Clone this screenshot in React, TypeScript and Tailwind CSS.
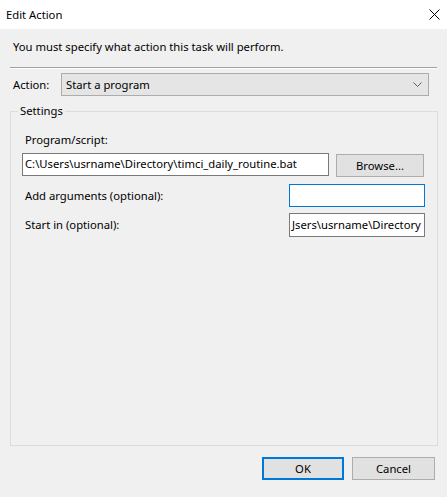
import React from 'react'

const font = { fontFamily: '"Noto Sans", "Open Sans", sans-serif' }

function CloseIcon() {
  return (
    <svg width="11" height="11" viewBox="0 0 11 11" className="block">
      <path d="M0.5 0.5 L10.5 10.5 M10.5 0.5 L0.5 10.5" stroke="#000" strokeWidth="1" fill="none" />
    </svg>
  )
}

function Chevron() {
  return (
    <svg width="9" height="5" viewBox="0 0 9 5" className="block">
      <path d="M0.5 0.5 L4.5 4.5 L8.5 0.5" stroke="#606060" strokeWidth="1" fill="none" />
    </svg>
  )
}

export default function App() {
  return (
    <div className="w-[447px] h-[497px] bg-[#f0f0f0] text-[11.25px] text-black overflow-hidden" style={font}>
      {/* title bar */}
      <div className="h-[29px] bg-white flex items-center pl-[6px] pr-[7px]">
        <span className="leading-[16px]">Edit Action</span>
        <div className="ml-auto">
          <CloseIcon />
        </div>
      </div>

      <div className="px-[10px]">
        <p className="mt-[10px] pl-[3px] leading-[16px]">You must specify what action this task will perform.</p>
        <div className="mt-[12px] border-t border-[#a0a0a0] border-b border-b-white" />

        <div className="mt-[4px] flex items-center">
          <span className="pl-[3px] w-[51px] leading-[16px]">Action:</span>
          <div className="h-[23px] w-[368px] bg-[#e5e5e5] border border-[#acacac] flex items-center pl-[4px] pr-[6px]">
            <span className="leading-[16px]">Start a program</span>
            <div className="ml-auto">
              <Chevron />
            </div>
          </div>
        </div>

        <fieldset className="mt-[7px] h-[343px] w-[428px] border border-[#dcdcdc] pl-[7px]">
          <legend className="px-[2px] leading-[16px]">Settings</legend>
          <div className="pl-[4px]">
            <div className="mt-[13px] pl-[3px] leading-[16px]">Program/script:</div>
            <div className="mt-[5px] flex items-start">
              <div className="h-[23px] w-[307px] bg-white border border-[#7a7a7a] flex items-center pl-[2px] overflow-hidden whitespace-nowrap">
                C:\Users\usrname\Directory\timci_daily_routine.bat
              </div>
              <button className="mt-[1px] ml-[7px] h-[23px] w-[88px] bg-[#e1e1e1] border border-[#adadad] flex items-center justify-center leading-[16px]">
                Browse...
              </button>
            </div>

            <div className="mt-[7px] flex items-center">
              <span className="pl-[3px] leading-[16px]">Add arguments (optional):</span>
              <div className="ml-auto mr-[12px] h-[23px] w-[136px] bg-white border border-[#0078d7]" />
            </div>

            <div className="mt-[6px] flex items-center">
              <span className="pl-[3px] leading-[16px]">Start in (optional):</span>
              <div className="ml-auto mr-[12px] h-[24px] w-[136px] bg-white border border-[#7a7a7a] flex items-center pl-[2px] overflow-hidden whitespace-nowrap">
                Jsers\usrname\Directory
              </div>
            </div>
          </div>
        </fieldset>

        <div className="mt-[11px] flex justify-end gap-[8px] pr-[2px]">
          <button className="h-[23px] w-[82px] bg-[#e1e1e1] border-2 border-[#0078d7] leading-[16px]">OK</button>
          <button className="h-[23px] w-[83px] bg-[#e1e1e1] border border-[#adadad] leading-[16px]">Cancel</button>
        </div>
      </div>
    </div>
  )
}
